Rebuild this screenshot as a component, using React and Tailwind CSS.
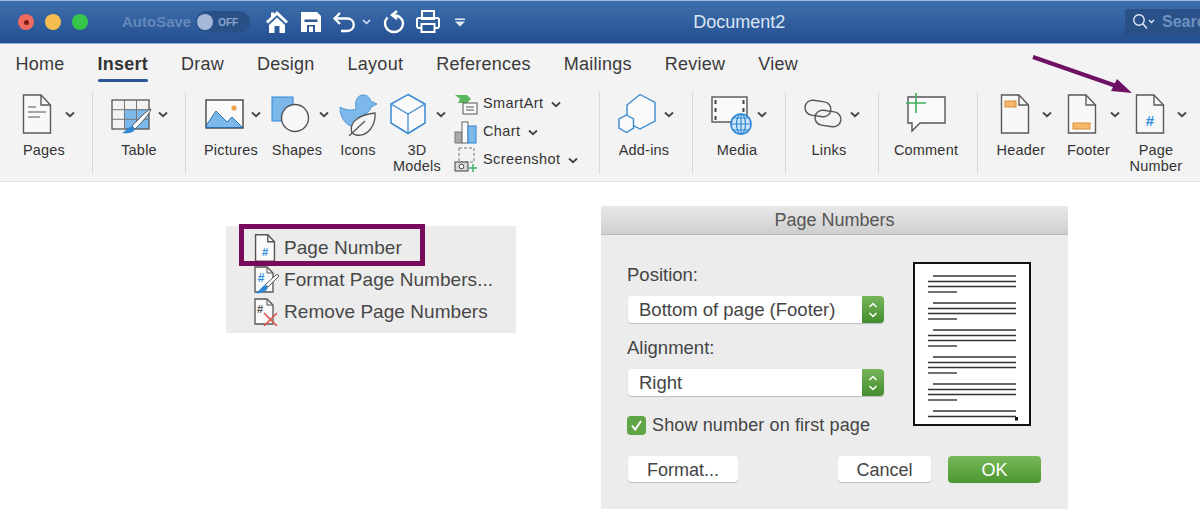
import React from "react";

const FONT = "font-['Liberation_Sans','Arial',sans-serif]";

function Chevron({ className = "" }) {
  return (
    <svg width="10" height="7" viewBox="0 0 10 7" className={`shrink-0 ${className}`}>
      <path d="M1 1.5L5 5.2L9 1.5" fill="none" stroke="#444" strokeWidth="1.8" />
    </svg>
  );
}

function Doc({ children }) {
  return (
    <svg width="30" height="40" viewBox="0 0 30 40">
      <path d="M1.5 1H19L28.5 11V39H1.5Z" fill="#f8f8f8" stroke="#5a5a5a" strokeWidth="1.4" />
      <path d="M19 1V11H28.5" fill="none" stroke="#5a5a5a" strokeWidth="1.4" />
      {children}
    </svg>
  );
}

const PagesIcon = () => (
  <Doc>
    <path d="M6 13H14M6 18H24M6 23H18" stroke="#8a8a8a" strokeWidth="1.5" />
  </Doc>
);
const HeaderIcon = () => (
  <Doc>
    <rect x="5" y="7" width="11" height="6" fill="#f6b76b" stroke="#d98f3a" />
  </Doc>
);
const FooterIcon = () => (
  <Doc>
    <rect x="6" y="29" width="17" height="6" fill="#f6b76b" stroke="#d98f3a" />
  </Doc>
);
const NumberIcon = () => (
  <Doc>
    <text x="15" y="32" textAnchor="middle" fontSize="15" fontWeight="700" fill="#2f8fdc" fontFamily="Liberation Sans">#</text>
  </Doc>
);

const TableIcon = () => (
  <svg width="42" height="42" viewBox="0 0 42 42">
    <rect x="14" y="16" width="24" height="20" fill="#7db8ea" />
    <rect x="1" y="7" width="37" height="29" fill="none" stroke="#555" strokeWidth="1.3" />
    <path d="M1 16.7H38M1 26.3H38M13.5 7V36M25.5 7V36" stroke="#777" strokeWidth="1" />
    <path d="M40 16C36 17 27 27 21 33L24 36C30 30 38 22 40 16Z" fill="#fff" stroke="#555" />
    <path d="M21 33L24 36C23 40 16 41 11 40C15 38 16 35 21 33Z" fill="#2f86d2" />
  </svg>
);
const PicturesIcon = () => (
  <svg width="40" height="34" viewBox="0 0 40 34">
    <rect x="1" y="3" width="37" height="28" fill="#fafafa" stroke="#444" strokeWidth="1.4" />
    <path d="M1.5 28L11 14L22 25L27 20L37.5 30.5H1.5Z" fill="#7db8ea" stroke="#2f6fa8" />
    <circle cx="29" cy="11" r="2.6" fill="#f0a04b" />
  </svg>
);
const ShapesIcon = () => (
  <svg width="40" height="40" viewBox="0 0 40 40">
    <rect x="1" y="3" width="21" height="24" fill="#7db8ea" stroke="#2f86d2" />
    <circle cx="24" cy="24" r="13.5" fill="#f8f8f8" stroke="#555" strokeWidth="1.4" />
  </svg>
);
const DuckIcon = () => (
  <svg width="40" height="46" viewBox="0 0 40 46">
    <path d="M3 16C8 19 14 20 19 18C17 8 22 4 26 4C31 4 33 7 33.5 10L40 13L34 16C33 20 30 22 27 24L14 35C8 33 3 26 3 16Z" fill="#7db8ea" stroke="#4d9ad8" />
    <path d="M15 42C12 33 19 24 38 22C39 34 31 46 19 44Z" fill="#f5f5f5" stroke="#555" strokeWidth="1.3" />
    <path d="M12 45L28 30" stroke="#555" strokeWidth="1.3" />
  </svg>
);
const CubeIcon = () => (
  <svg width="38" height="42" viewBox="0 0 38 42">
    <path d="M19 1.5L36 11V30L19 40.5L2 30V11Z" fill="#fafafa" stroke="#3a8ad0" strokeWidth="1.5" />
    <path d="M2 11L19 21L36 11M19 21V40" fill="none" stroke="#3a8ad0" strokeWidth="1.2" />
  </svg>
);
const SmartArtIcon = () => (
  <svg width="24" height="24" viewBox="0 0 24 24">
    <path d="M1 3H13L17 7L13 11H4L6 7Z" fill="#5cb85c" />
    <rect x="9" y="11" width="14" height="11" fill="#fafafa" stroke="#555" />
    <path d="M12 15H20M12 18H20" stroke="#555" />
  </svg>
);
const ChartIcon = () => (
  <svg width="24" height="26" viewBox="0 0 24 26">
    <rect x="1" y="13" width="7" height="11" fill="#a9a9a9" stroke="#777" />
    <rect x="8" y="3" width="6" height="21" fill="#fafafa" stroke="#666" />
    <rect x="14" y="7" width="8" height="17" fill="#7db8ea" stroke="#2f86d2" />
  </svg>
);
const ScreenshotIcon = () => (
  <svg width="24" height="26" viewBox="0 0 24 26">
    <rect x="5" y="1" width="15" height="14" fill="none" stroke="#777" strokeDasharray="3 2" />
    <rect x="1" y="15" width="13" height="9" fill="#d8d8d8" stroke="#444" />
    <circle cx="7.5" cy="19.5" r="2.3" fill="#fafafa" stroke="#444" />
    <path d="M19 17V25M15 21H23" stroke="#3fae5a" strokeWidth="1.4" />
  </svg>
);
const AddinsIcon = () => (
  <svg width="42" height="42" viewBox="0 0 42 42">
    <path d="M23 1.5L38 9.5V28L23 36L10 29V12Z" fill="#fafafa" stroke="#3a8ad0" strokeWidth="1.4" />
    <path d="M9.5 22L16.5 26V35L9.5 39.5L2 35V26Z" fill="#fafafa" stroke="#3a8ad0" strokeWidth="1.4" />
  </svg>
);
const MediaIcon = () => (
  <svg width="42" height="44" viewBox="0 0 42 44">
    <rect x="1" y="5" width="35" height="25" fill="#fafafa" stroke="#555" strokeWidth="1.4" />
    <path d="M4.5 8V12M4.5 16V20M4.5 24V28M32.5 8V12M32.5 16V20" stroke="#444" strokeWidth="2" />
    <circle cx="30" cy="32" r="10" fill="#cfe6f8" stroke="#2f86d2" strokeWidth="1.6" />
    <path d="M20 32H40M30 22V42M23 26H37M23 38H37" stroke="#2f86d2" strokeWidth="1.2" />
    <ellipse cx="30" cy="32" rx="4.5" ry="10" fill="none" stroke="#2f86d2" strokeWidth="1.2" />
  </svg>
);
const LinksIcon = () => (
  <svg width="40" height="32" viewBox="0 0 40 32">
    <rect x="2" y="3" width="26" height="15" rx="7.5" fill="none" stroke="#555" strokeWidth="1.4" transform="rotate(8 15 10)" />
    <rect x="12" y="13" width="26" height="15" rx="7.5" fill="none" stroke="#555" strokeWidth="1.4" transform="rotate(8 25 20)" />
  </svg>
);
const CommentIcon = () => (
  <svg width="44" height="42" viewBox="0 0 44 42">
    <path d="M5 4H42V30H17L9 38V30H5Z" fill="#fafafa" stroke="#555" strokeWidth="1.4" />
    <path d="M13 0V20M3 10H23" stroke="#3fae5a" strokeWidth="1.6" />
  </svg>
);

function RibbonButton({ icon, label, chevron, width, iconBox, chevronClass }) {
  return (
    <div className={`flex flex-col items-center shrink-0 ${width}`}>
      <div className={`flex items-center h-[44px] w-full ${iconBox}`}>
        {icon}
        {chevron && <Chevron className={chevronClass} />}
      </div>
      <div className="mt-[6px] text-center text-[14.5px] leading-[16px] text-[#333] tracking-[0.2px]">{label}</div>
    </div>
  );
}

function SmallRibbon({ icon, label, chevronClass }) {
  return (
    <div className="flex items-center h-[30px]">
      <span className="w-[29px] shrink-0">{icon}</span>
      <span className="text-[14.5px] text-[#333] tracking-[0.4px]">{label}</span>
      <Chevron className={chevronClass} />
    </div>
  );
}

function TitleBar() {
  return (
    <div className="flex items-center h-[44px] pl-[18px] bg-gradient-to-b from-[#3f6fad] to-[#234f90] border-t border-t-[#9db8d8] border-b border-b-[#8fb0d6]">
      <div className="flex items-center gap-[11px]">
        <span className="flex items-center justify-center w-[16px] h-[16px] rounded-full bg-[#ee6a5f]">
          <span className="w-[5px] h-[5px] rounded-full bg-[#7d1a14]" />
        </span>
        <span className="w-[16px] h-[16px] rounded-full bg-[#f6bd4f]" />
        <span className="w-[16px] h-[16px] rounded-full bg-[#35c649]" />
      </div>
      <span className="ml-[34px] text-[15px] font-bold text-[#6488bb]">AutoSave</span>
      <div className="ml-[5px] flex items-center w-[54px] h-[22px] rounded-full bg-[#2a5088] pl-[1px]">
        <span className="w-[16px] h-[16px] rounded-full bg-[#a6b9d9]" />
        <span className="ml-[5px] text-[10px] font-bold text-[#8fa8cd]">OFF</span>
      </div>
      <svg className="ml-[15px]" width="24" height="24" viewBox="0 0 24 24">
        <path d="M12 1L23 11.5L21 13.5L12 5L3 13.5L1 11.5L6 6.7V2.5H9V4Z M12 7.5L20 15V23H14.5V16H9.5V23H4V15Z" fill="#fff" />
      </svg>
      <svg className="ml-[11px]" width="22" height="22" viewBox="0 0 22 22">
        <path d="M2 1H17L21 5V21H1V1Z" fill="#fff" />
        <rect x="4.5" y="8.5" width="13" height="2.5" fill="#2c5795" />
        <rect x="7" y="14" width="8" height="7" fill="#2c5795" />
        <rect x="9" y="15.5" width="4" height="5.5" fill="#fff" />
      </svg>
      <svg className="ml-[10px]" width="24" height="22" viewBox="0 0 24 22">
        <path d="M8 2L2.5 7.5L8 13M3 7.5H15C24 7.5 24 20 15 20H9" fill="none" stroke="#fff" strokeWidth="2.3" />
      </svg>
      <svg className="ml-[6px]" width="9" height="6" viewBox="0 0 9 6">
        <path d="M1 1L4.5 4.5L8 1" fill="none" stroke="#dfe8f4" strokeWidth="1.5" />
      </svg>
      <svg className="ml-[11px]" width="24" height="24" viewBox="0 0 24 24">
        <path d="M15 1L10 5L15 9M10.5 5C17 5 21 9 21 13.5C21 18.5 17 22 12 22C7 22 3 18.5 3 13.5C3 11 4 9 5.5 7.5" fill="none" stroke="#fff" strokeWidth="2.4" />
      </svg>
      <svg className="ml-[9px]" width="26" height="26" viewBox="0 0 26 26">
        <rect x="7" y="2" width="12" height="8" fill="none" stroke="#fff" strokeWidth="2" />
        <rect x="2" y="9" width="22" height="10" rx="2" fill="none" stroke="#fff" strokeWidth="2" />
        <rect x="6.5" y="15" width="13" height="8" fill="#2c5795" stroke="#fff" strokeWidth="2" />
      </svg>
      <svg className="ml-[14px]" width="10" height="10" viewBox="0 0 10 10">
        <path d="M0 1.5H10V3H0Z M0 4.5H10L5 9.5Z" fill="#e5ecf6" />
      </svg>
      <div className="ml-[204px] w-[140px] text-[18px] text-center text-[#dce6f3] whitespace-nowrap">Document2</div>
      <div className="ml-auto flex items-center w-[75px] h-[27px] bg-[#2a5088] rounded-l-[3px] pl-[7px] overflow-hidden">
        <svg className="shrink-0" width="24" height="18" viewBox="0 0 24 18">
          <circle cx="7" cy="7" r="5.2" fill="none" stroke="#e3ebf5" strokeWidth="1.4" />
          <path d="M11 11L15 15.5" stroke="#e3ebf5" strokeWidth="1.4" />
          <path d="M17 7L19.5 9.5L22 7" fill="none" stroke="#e3ebf5" strokeWidth="1.3" />
        </svg>
        <span className="ml-[6px] text-[16px] font-bold text-[#6f90c0]">Search</span>
      </div>
    </div>
  );
}

function Tabs() {
  const tabs = ["Home", "Insert", "Draw", "Design", "Layout", "References", "Mailings", "Review", "View"];
  return (
    <div className="flex items-start gap-[33px] h-[38px] pl-[15.5px] pt-[9px]">
      {tabs.map((t) => (
        <div key={t} className="relative text-[18px] leading-[22px] tracking-[0.25px] text-[#3a3a3a] whitespace-nowrap">
          <span className={t === "Insert" ? "font-bold text-[#333]" : ""}>{t}</span>
          {t === "Insert" && (
            <span className="absolute left-0 right-0 top-[26px] h-[3px] rounded-full bg-[#2b579a]" />
          )}
        </div>
      ))}
    </div>
  );
}

function Ribbon() {
  return (
    <div className="flex items-start h-[100px] pt-[10px] bg-[#f3f3f3] border-b border-[#e2e2e2]">
      <div className="flex w-[93px] h-[82px] border-r border-[#d9d9d9] shrink-0">
        <RibbonButton width="w-[88px]" iconBox="pl-[22px]" chevronClass="ml-[13px]" chevron icon={<PagesIcon />} label="Pages" />
      </div>
      <div className="flex w-[93px] h-[82px] border-r border-[#d9d9d9] shrink-0 pl-[12px]">
        <RibbonButton width="w-[68px]" iconBox="pl-[6px]" chevronClass="ml-[5px]" chevron icon={<TableIcon />} label="Table" />
      </div>
      <div className="flex w-[414px] h-[82px] border-r border-[#d9d9d9] shrink-0 pl-[12px]">
        <RibbonButton width="w-[66px]" iconBox="pl-[7px]" chevronClass="ml-[6px]" chevron icon={<PicturesIcon />} label="Pictures" />
        <RibbonButton width="w-[66px]" iconBox="pl-[7px]" chevronClass="ml-[8px]" chevron icon={<ShapesIcon />} label="Shapes" />
        <RibbonButton width="w-[56px]" iconBox="pl-[7px]" icon={<DuckIcon />} label="Icons" />
        <RibbonButton width="w-[62px]" iconBox="pl-[3px]" chevronClass="ml-[9px]" chevron icon={<CubeIcon />} label={<>3D<br />Models</>} />
        <div className="flex flex-col -mt-[2px] ml-[6px]">
          <SmallRibbon icon={<SmartArtIcon />} label="SmartArt" chevronClass="ml-[8px]" />
          <SmallRibbon icon={<ChartIcon />} label="Chart" chevronClass="ml-[8px]" />
          <SmallRibbon icon={<ScreenshotIcon />} label="Screenshot" chevronClass="ml-[8px]" />
        </div>
      </div>
      <div className="flex w-[93px] h-[82px] border-r border-[#d9d9d9] shrink-0 pl-[10px]">
        <RibbonButton width="w-[68px]" iconBox="pl-[7px]" chevronClass="ml-[5px]" chevron icon={<AddinsIcon />} label="Add-ins" />
      </div>
      <div className="flex w-[93px] h-[82px] border-r border-[#d9d9d9] shrink-0 pl-[10px]">
        <RibbonButton width="w-[68px]" iconBox="pl-[8px]" chevronClass="ml-[4px]" chevron icon={<MediaIcon />} label="Media" />
      </div>
      <div className="flex w-[93px] h-[82px] border-r border-[#d9d9d9] shrink-0 pl-[9px]">
        <RibbonButton width="w-[68px]" iconBox="pl-[8px]" chevronClass="ml-[7px]" chevron icon={<LinksIcon />} label="Links" />
      </div>
      <div className="flex w-[99px] h-[82px] border-r border-[#d9d9d9] shrink-0 pl-[15px]">
        <RibbonButton width="w-[64px]" iconBox="pl-[9px]" icon={<CommentIcon />} label="Comment" />
      </div>
      <div className="flex pl-[9px]">
        <RibbonButton width="w-[68px]" iconBox="pl-[13px]" chevronClass="ml-[12px]" chevron icon={<HeaderIcon />} label="Header" />
        <RibbonButton width="w-[67px]" iconBox="pl-[12px]" chevronClass="ml-[13px]" chevron icon={<FooterIcon />} label="Footer" />
        <RibbonButton width="w-[68px]" iconBox="pl-[13px]" chevronClass="ml-[12px]" chevron icon={<NumberIcon />} label={<>Page<br />Number</>} />
      </div>
    </div>
  );
}

function MenuRow({ icon, label }) {
  return (
    <div className="flex items-center h-[32px]">
      <span className="w-[30px] ml-[28px] shrink-0">{icon}</span>
      <span className="text-[19px] tracking-[0.05px] text-[#474747] whitespace-nowrap">{label}</span>
    </div>
  );
}

function PageMenu() {
  return (
    <div className="relative mt-[20px] ml-[226px] w-[290px] h-[107px] pt-[6px] bg-[#ececec] shrink-0">
      <div className="absolute left-[13px] -top-[2px] w-[186px] h-[42px] border-[5px] border-[#7a0b5c]" />
      <MenuRow
        label="Page Number"
        icon={
          <svg width="22" height="28" viewBox="0 0 30 40">
            <path d="M1.5 1H19L28.5 11V39H1.5Z" fill="#fafafa" stroke="#555" strokeWidth="2" />
            <path d="M19 1V11H28.5" fill="none" stroke="#555" strokeWidth="2" />
            <text x="15" y="32" textAnchor="middle" fontSize="16" fontWeight="700" fill="#2f8fdc" fontFamily="Liberation Sans">#</text>
          </svg>
        }
      />
      <MenuRow
        label="Format Page Numbers..."
        icon={
          <svg width="26" height="28" viewBox="0 0 26 28">
            <path d="M1 1H13L19 7V26H1Z" fill="#fafafa" stroke="#555" strokeWidth="1.3" />
            <path d="M13 1V7H19" fill="none" stroke="#555" />
            <text x="7" y="16" textAnchor="middle" fontSize="12" fontWeight="700" fill="#2f8fdc" fontFamily="Liberation Sans">#</text>
            <path d="M25 10L14 21L11 19L23 8Z" fill="#fff" stroke="#555" />
            <path d="M11 19L14 21C13 26 6 28 1 27C6 25 7 21 11 19Z" fill="#2f86d2" />
          </svg>
        }
      />
      <MenuRow
        label="Remove Page Numbers"
        icon={
          <svg width="26" height="28" viewBox="0 0 26 28">
            <path d="M1 1H13L19 7V26H1Z" fill="#fafafa" stroke="#555" strokeWidth="1.3" />
            <path d="M13 1V7H19" fill="none" stroke="#555" />
            <text x="6" y="15" textAnchor="middle" fontSize="11" fontWeight="700" fill="#555" fontFamily="Liberation Sans">#</text>
            <path d="M10 15L23 28M23 15L10 28" stroke="#e2574c" strokeWidth="1.7" />
          </svg>
        }
      />
    </div>
  );
}

function Stepper() {
  return (
    <span className="flex items-center justify-center w-[22px] h-full rounded-r-[4px] bg-gradient-to-b from-[#75b558] to-[#438d2f]">
      <svg width="10" height="18" viewBox="0 0 10 18">
        <path d="M1.5 6L5 2.5L8.5 6M1.5 12L5 15.5L8.5 12" fill="none" stroke="#fff" strokeWidth="1.5" />
      </svg>
    </span>
  );
}

function SelectBox({ value }) {
  return (
    <div className="flex items-center justify-between w-[256px] h-[27px] rounded-[4px] bg-white shadow-[0_1px_1px_#bdbdbd] pl-[11px]">
      <span className="pt-[1px] text-[18.5px] text-[#444] whitespace-nowrap">{value}</span>
      <Stepper />
    </div>
  );
}

function PagePreview() {
  const paragraphs = [0, 27, 54, 81, 108];
  return (
    <svg className="ml-[29px] mt-[27px] shrink-0" width="118" height="164" viewBox="0 0 118 164">
      <rect x="1" y="1" width="116" height="162" fill="#fff" stroke="#111" strokeWidth="2" />
      {paragraphs.map((y) => (
        <g key={y} stroke="#333" strokeWidth="1.4">
          <path d={`M20 ${14 + y}H103`} />
          <path d={`M15 ${19.5 + y}H103`} />
          <path d={`M15 ${24.5 + y}H103`} />
          <path d={`M15 ${30 + y}H44`} />
        </g>
      ))}
      <g stroke="#333" strokeWidth="1.4">
        <path d="M20 149H103" />
        <path d="M15 154.5H103" />
      </g>
      <rect x="102" y="155" width="3" height="3.5" fill="#111" />
    </svg>
  );
}

function PageNumbersDialog() {
  return (
    <div className="ml-[85px] w-[467px] h-[303px] bg-[#ececec] shrink-0">
      <div className="flex items-center justify-center h-[29px] bg-gradient-to-b from-[#e8e8e8] to-[#cfcfcf] border-b border-[#bbb] text-[18px] text-[#555]">
        Page Numbers
      </div>
      <div className="flex pl-[27px]">
        <div className="w-[256px] shrink-0">
          <div className="mt-[30px] -ml-[1px] h-[20px] leading-[20px] text-[18.5px] text-[#444]">Position:</div>
          <div className="mt-[11px]"><SelectBox value="Bottom of page (Footer)" /></div>
          <div className="mt-[15px] -ml-[1px] h-[20px] leading-[20px] text-[18.5px] text-[#444]">Alignment:</div>
          <div className="mt-[11px]"><SelectBox value="Right" /></div>
          <div className="mt-[19px] flex items-center h-[20px] -ml-[1px]">
            <span className="flex items-center justify-center w-[19px] h-[19px] rounded-[4px] bg-[#5fa545]">
              <svg width="13" height="13" viewBox="0 0 13 13">
                <path d="M2 6.5L5.2 10.5L11 2" fill="none" stroke="#fff" strokeWidth="2" />
              </svg>
            </span>
            <span className="ml-[6px] pt-[1px] text-[18px] tracking-[0.12px] text-[#444] whitespace-nowrap">Show number on first page</span>
          </div>
        </div>
        <PagePreview />
      </div>
      <div className="flex mt-[21px] pl-[27px]">
        <button className="w-[110px] h-[26px] pt-[1px] rounded-[4px] bg-white shadow-[0_1px_1px_#bdbdbd] text-[18px] text-[#444]">Format...</button>
        <button className="ml-[100px] w-[93px] h-[26px] pt-[1px] rounded-[4px] bg-white shadow-[0_1px_1px_#bdbdbd] text-[18px] text-[#444]">Cancel</button>
        <button className="ml-[17px] w-[93px] h-[27px] pt-[1px] rounded-[4px] bg-gradient-to-b from-[#79b95b] to-[#4a962f] text-[18px] text-white">OK</button>
      </div>
    </div>
  );
}

export default function App() {
  return (
    <div className={`relative w-[1200px] h-[509px] overflow-hidden bg-white ${FONT}`}>
      <TitleBar />
      <div className="bg-[#f3f3f3]">
        <Tabs />
        <Ribbon />
      </div>
      <div className="flex pt-[24px]">
        <PageMenu />
        <PageNumbersDialog />
      </div>
      {/* annotation arrow */}
      <svg className="absolute left-[1025px] top-[50px]" width="120" height="55" viewBox="0 0 120 55">
        <path d="M8 7L97 38" stroke="#6e1063" strokeWidth="4" />
        <path d="M107 43L92 29L86 41Z" fill="#6e1063" />
      </svg>
    </div>
  );
}
